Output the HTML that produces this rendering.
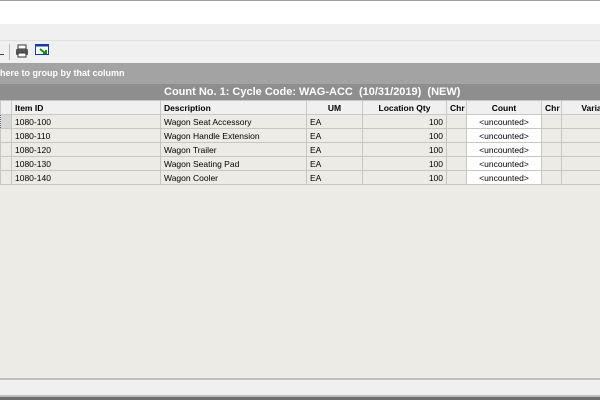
<!DOCTYPE html>
<html><head><meta charset="utf-8"><style>
*{margin:0;padding:0;box-sizing:border-box}
body{width:600px;height:400px;overflow:hidden;background:#ecebe6;font-family:"Liberation Sans",Arial,sans-serif;font-size:9px;color:#000;position:relative}
.abs{position:absolute}
table{border-collapse:collapse;table-layout:fixed;position:absolute;left:0;top:100px;width:621px}
td{height:14px;border:1px solid #c8c6c0;padding:0 3px;white-space:nowrap;overflow:hidden;font-size:8.5px}
tr.h td{background:#f0f0f0;font-weight:bold;border-color:#c8c8c8}
.r{text-align:right}.c{text-align:center}
.w{background:#fff}
</style></head><body>
<div class="abs" style="left:0;top:0;width:600px;height:1px;background:#a0a0a0"></div>
<div class="abs" style="left:0;top:1px;width:600px;height:23px;background:#fff"></div>
<div class="abs" style="left:0;top:24px;width:600px;height:16px;background:#f0f0f0"></div>
<div class="abs" style="left:0;top:40px;width:600px;height:1px;background:#e0e0e0"></div>
<div class="abs" style="left:0;top:41px;width:600px;height:22px;background:#f0f0f0"></div>
<div class="abs" style="left:0;top:47px;width:4px;height:8px;border-bottom:1px solid #444"></div>
<div class="abs" style="left:9px;top:44px;width:1px;height:16px;background:#bbb"></div>
<svg class="abs" style="left:15px;top:44px" width="14" height="14" viewBox="0 0 14 14"><rect x="3" y="1" width="8" height="4" fill="#fff" stroke="#333"/><rect x="1" y="5" width="12" height="6" rx="1" fill="#555"/><rect x="3" y="9" width="8" height="4" fill="#fff" stroke="#333"/></svg>
<svg class="abs" style="left:35px;top:44px" width="15" height="13" viewBox="0 0 15 13"><rect x="0.5" y="0.5" width="13" height="10" fill="#fff" stroke="#1a3aa0"/><rect x="0.5" y="0.5" width="13" height="2" fill="#1a3aa0"/><path d="M5 5l5 4M8 9h3V6" stroke="#1a8a1a" stroke-width="2" fill="none"/></svg>
<div class="abs" style="left:0;top:63px;width:600px;height:21px;background:#a3a3a3;color:#fff;font-weight:bold;font-size:9px;line-height:21px">here to group by that column</div>
<div class="abs" style="left:0;top:84px;width:600px;height:16px;background:#8e8e8e;color:#fff;font-weight:bold;font-size:11px;line-height:16px;padding-left:164px">Count No. 1: Cycle Code: WAG-ACC&nbsp; (10/31/2019)&nbsp; (NEW)</div>
<table>
<colgroup><col style="width:11px"><col style="width:149px"><col style="width:146px"><col style="width:56px"><col style="width:84px"><col style="width:20px"><col style="width:75px"><col style="width:20px"><col style="width:60px"></colgroup>
<tr class="h"><td></td><td>Item ID</td><td>Description</td><td class="c">UM</td><td class="c">Location Qty</td><td>Chr</td><td class="c">Count</td><td>Chr</td><td class="c">Varia</td></tr>
<tr><td style="background:#d8d8d8;border:1px dotted #666"></td><td>1080-100</td><td>Wagon Seat Accessory</td><td>EA</td><td class="r">100</td><td></td><td class="w c">&lt;uncounted&gt;</td><td></td><td></td></tr>
<tr><td></td><td>1080-110</td><td>Wagon Handle Extension</td><td>EA</td><td class="r">100</td><td></td><td class="w c">&lt;uncounted&gt;</td><td></td><td></td></tr>
<tr><td></td><td>1080-120</td><td>Wagon Trailer</td><td>EA</td><td class="r">100</td><td></td><td class="w c">&lt;uncounted&gt;</td><td></td><td></td></tr>
<tr><td></td><td>1080-130</td><td>Wagon Seating Pad</td><td>EA</td><td class="r">100</td><td></td><td class="w c">&lt;uncounted&gt;</td><td></td><td></td></tr>
<tr><td></td><td>1080-140</td><td>Wagon Cooler</td><td>EA</td><td class="r">100</td><td></td><td class="w c">&lt;uncounted&gt;</td><td></td><td></td></tr>
</table>
<div class="abs" style="left:0;top:378px;width:600px;height:2px;background:#c0c0c0"></div>
<div class="abs" style="left:0;top:380px;width:600px;height:15px;background:#f0f0f0"></div>
<div class="abs" style="left:0;top:395px;width:600px;height:2px;background:#bdbdbd"></div>
<div class="abs" style="left:0;top:397px;width:600px;height:3px;background:#6e6e6e"></div>
</body></html>
